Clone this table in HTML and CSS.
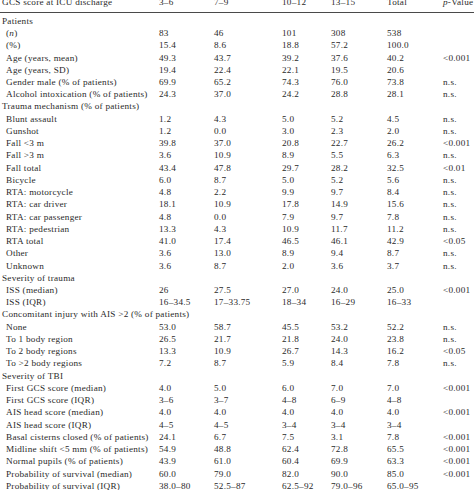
FILE: index.html
```html
<!DOCTYPE html>
<html>
<head>
<meta charset="utf-8">
<link rel="stylesheet" href="styles.css">
</head>
<body>
<div class="tbl">
  <div class="row head">
    <span>GCS score at ICU discharge</span><span>3–6</span><span>7–9</span><span>10–12</span><span>13–15</span><span>Total</span><span><i>p</i>-Value</span>
  </div>
  <div class="body">
    <div class="row sec"><span>Patients</span></div>
    <div class="row"><span>(<i>n</i>)</span><span>83</span><span>46</span><span>101</span><span>308</span><span>538</span><span></span></div>
    <div class="row"><span>(%)</span><span>15.4</span><span>8.6</span><span>18.8</span><span>57.2</span><span>100.0</span><span></span></div>
    <div class="row"><span>Age (years, mean)</span><span>49.3</span><span>43.7</span><span>39.2</span><span>37.6</span><span>40.2</span><span>&lt;0.001</span></div>
    <div class="row"><span>Age (years, SD)</span><span>19.4</span><span>22.4</span><span>22.1</span><span>19.5</span><span>20.6</span><span></span></div>
    <div class="row"><span>Gender male (% of patients)</span><span>69.9</span><span>65.2</span><span>74.3</span><span>76.0</span><span>73.8</span><span>n.s.</span></div>
    <div class="row"><span>Alcohol intoxication (% of patients)</span><span>24.3</span><span>37.0</span><span>24.2</span><span>28.8</span><span>28.1</span><span>n.s.</span></div>
    <div class="row sec"><span>Trauma mechanism (% of patients)</span></div>
    <div class="row"><span>Blunt assault</span><span>1.2</span><span>4.3</span><span>5.0</span><span>5.2</span><span>4.5</span><span>n.s.</span></div>
    <div class="row"><span>Gunshot</span><span>1.2</span><span>0.0</span><span>3.0</span><span>2.3</span><span>2.0</span><span>n.s.</span></div>
    <div class="row"><span>Fall &lt;3 m</span><span>39.8</span><span>37.0</span><span>20.8</span><span>22.7</span><span>26.2</span><span>&lt;0.001</span></div>
    <div class="row"><span>Fall &gt;3 m</span><span>3.6</span><span>10.9</span><span>8.9</span><span>5.5</span><span>6.3</span><span>n.s.</span></div>
    <div class="row"><span>Fall total</span><span>43.4</span><span>47.8</span><span>29.7</span><span>28.2</span><span>32.5</span><span>&lt;0.01</span></div>
    <div class="row"><span>Bicycle</span><span>6.0</span><span>8.7</span><span>5.0</span><span>5.2</span><span>5.6</span><span>n.s.</span></div>
    <div class="row"><span>RTA: motorcycle</span><span>4.8</span><span>2.2</span><span>9.9</span><span>9.7</span><span>8.4</span><span>n.s.</span></div>
    <div class="row"><span>RTA: car driver</span><span>18.1</span><span>10.9</span><span>17.8</span><span>14.9</span><span>15.6</span><span>n.s.</span></div>
    <div class="row"><span>RTA: car passenger</span><span>4.8</span><span>0.0</span><span>7.9</span><span>9.7</span><span>7.8</span><span>n.s.</span></div>
    <div class="row"><span>RTA: pedestrian</span><span>13.3</span><span>4.3</span><span>10.9</span><span>11.7</span><span>11.2</span><span>n.s.</span></div>
    <div class="row"><span>RTA total</span><span>41.0</span><span>17.4</span><span>46.5</span><span>46.1</span><span>42.9</span><span>&lt;0.05</span></div>
    <div class="row"><span>Other</span><span>3.6</span><span>13.0</span><span>8.9</span><span>9.4</span><span>8.7</span><span>n.s.</span></div>
    <div class="row"><span>Unknown</span><span>3.6</span><span>8.7</span><span>2.0</span><span>3.6</span><span>3.7</span><span>n.s.</span></div>
    <div class="row sec"><span>Severity of trauma</span></div>
    <div class="row"><span>ISS (median)</span><span>26</span><span>27.5</span><span>27.0</span><span>24.0</span><span>25.0</span><span>&lt;0.001</span></div>
    <div class="row"><span>ISS (IQR)</span><span>16–34.5</span><span>17–33.75</span><span>18–34</span><span>16–29</span><span>16–33</span><span></span></div>
    <div class="row sec"><span>Concomitant injury with AIS &gt;2 (% of patients)</span></div>
    <div class="row"><span>None</span><span>53.0</span><span>58.7</span><span>45.5</span><span>53.2</span><span>52.2</span><span>n.s.</span></div>
    <div class="row"><span>To 1 body region</span><span>26.5</span><span>21.7</span><span>21.8</span><span>24.0</span><span>23.8</span><span>n.s.</span></div>
    <div class="row"><span>To 2 body regions</span><span>13.3</span><span>10.9</span><span>26.7</span><span>14.3</span><span>16.2</span><span>&lt;0.05</span></div>
    <div class="row"><span>To &gt;2 body regions</span><span>7.2</span><span>8.7</span><span>5.9</span><span>8.4</span><span>7.8</span><span>n.s.</span></div>
    <div class="row sec"><span>Severity of TBI</span></div>
    <div class="row"><span>First GCS score (median)</span><span>4.0</span><span>5.0</span><span>6.0</span><span>7.0</span><span>7.0</span><span>&lt;0.001</span></div>
    <div class="row"><span>First GCS score (IQR)</span><span>3–6</span><span>3–7</span><span>4–8</span><span>6–9</span><span>4–8</span><span></span></div>
    <div class="row"><span>AIS head score (median)</span><span>4.0</span><span>4.0</span><span>4.0</span><span>4.0</span><span>4.0</span><span>&lt;0.001</span></div>
    <div class="row"><span>AIS head score (IQR)</span><span>4–5</span><span>4–5</span><span>3–4</span><span>3–4</span><span>3–4</span><span></span></div>
    <div class="row"><span>Basal cisterns closed (% of patients)</span><span>24.1</span><span>6.7</span><span>7.5</span><span>3.1</span><span>7.8</span><span>&lt;0.001</span></div>
    <div class="row"><span>Midline shift &lt;5 mm (% of patients)</span><span>54.9</span><span>48.8</span><span>62.4</span><span>72.8</span><span>65.5</span><span>&lt;0.001</span></div>
    <div class="row"><span>Normal pupils (% of patients)</span><span>43.9</span><span>61.0</span><span>60.4</span><span>69.9</span><span>63.3</span><span>&lt;0.001</span></div>
    <div class="row"><span>Probability of survival (median)</span><span>60.0</span><span>79.0</span><span>82.0</span><span>90.0</span><span>85.0</span><span>&lt;0.001</span></div>
    <div class="row"><span>Probability of survival (IQR)</span><span>38.0–80</span><span>52.5–87</span><span>62.5–92</span><span>79.0–96</span><span>65.0–95</span><span></span></div>
  </div>
</div>
</body>
</html>
```
FILE: styles.css
```css
html, body {
  margin: 0;
  padding: 0;
  background: #fff;
  overflow: hidden;
}
.tbl {
  margin-top: -4.5px;
  font-family: "Liberation Serif", "Times New Roman", serif;
  font-size: 9.2px;
  letter-spacing: 0.25px;
  color: #2a2a2a;
}
.row {
  display: grid;
  grid-template-columns: 159px 55px 68px 49px 56px 56px 31px;
  height: 12.24px;
  line-height: 12.24px;
  white-space: nowrap;
}
.row > span:first-child {
  padding-left: 6px;
}
.row.sec > span:first-child {
  padding-left: 2px;
  grid-column: 1 / -1;
}
.head {
  box-sizing: content-box;
  padding-bottom: 4.3px;
  border-bottom: 1.5px solid #4a4a4a;
}
.head > span:first-child {
  padding-left: 2px;
}
.body {
  padding-top: 1.8px;
}
```
